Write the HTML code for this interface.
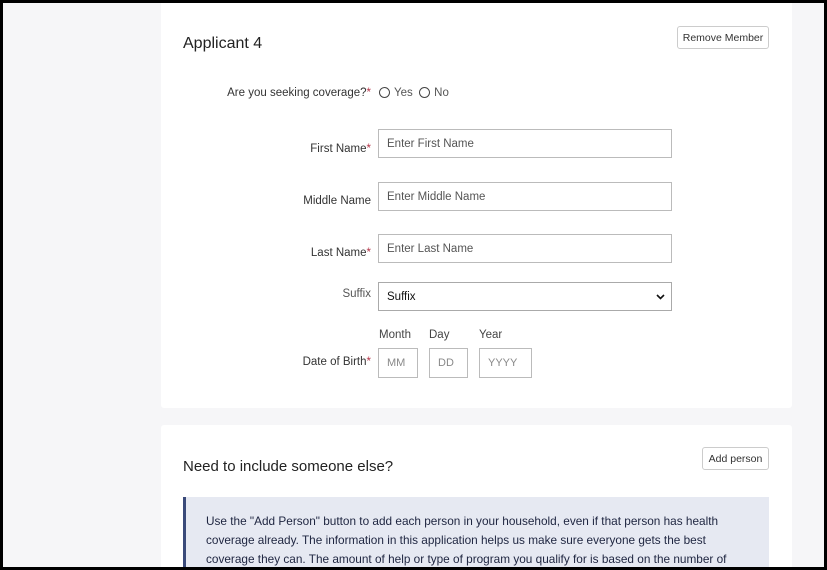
<!DOCTYPE html>
<html><head><style>
*{margin:0;padding:0;box-sizing:border-box}
body{width:827px;height:570px;overflow:hidden;background:#000;font-family:"Liberation Sans",sans-serif;color:#222;position:relative}
.frame{position:absolute;left:3px;top:3px;width:821px;height:564px;background:#f6f6f8;overflow:hidden}
.card{position:absolute;left:158px;width:631px;background:#fff;border-radius:3px}
.a{position:absolute;white-space:nowrap}
.lbl{font-size:11.5px;color:#333;text-align:right;width:198px}
.req{color:#b5364a}
.inp{position:absolute;border:1px solid #bbb;background:#fff;font-size:11.5px;color:#555;padding-left:8px;display:flex;align-items:center}
.btn{position:absolute;border:1px solid #ccc;border-radius:3px;background:#fff;font-size:10.5px;color:#333;display:flex;align-items:center;justify-content:center}
.radio{display:inline-block;width:11px;height:11px;border:1px solid #444;border-radius:50%;vertical-align:-2px;margin-right:4px}
</style></head><body>
<div class="frame">
<div class="card" style="top:-5px;height:410px">
  <div class="a" style="left:22px;top:37px;font-size:16px;color:#222">Applicant 4</div>
  <div class="btn" style="left:516px;top:28px;width:92px;height:23px">Remove Member</div>
  <div class="a lbl" style="left:12px;top:89px">Are you seeking coverage?<span class="req">*</span></div>
  <div class="a" style="left:218px;top:89px;font-size:11.5px;color:#555"><span class="radio"></span>Yes&nbsp;&nbsp;<span class="radio"></span>No</div>
  <div class="a lbl" style="left:12px;top:145px">First Name<span class="req">*</span></div>
  <div class="inp" style="left:217px;top:131px;width:294px;height:29px">Enter First Name</div>
  <div class="a lbl" style="left:12px;top:197px">Middle Name</div>
  <div class="inp" style="left:217px;top:184px;width:294px;height:29px">Enter Middle Name</div>
  <div class="a lbl" style="left:12px;top:249px">Last Name<span class="req">*</span></div>
  <div class="inp" style="left:217px;top:236px;width:294px;height:29px">Enter Last Name</div>
  <div class="a lbl" style="left:12px;top:290px;color:#555">Suffix</div>
  <div class="inp" style="left:217px;top:284px;width:294px;height:29px;color:#111;justify-content:space-between;padding-right:6px;border-color:#aaa">Suffix<svg width="9" height="6" viewBox="0 0 9 6"><path d="M1 1l3.5 3.5L8 1" fill="none" stroke="#111" stroke-width="1.6"/></svg></div>
  <div class="a" style="left:218px;top:331px;font-size:11.5px;color:#444">Month</div>
  <div class="a" style="left:268px;top:331px;font-size:11.5px;color:#444">Day</div>
  <div class="a" style="left:318px;top:331px;font-size:11.5px;color:#444">Year</div>
  <div class="a lbl" style="left:12px;top:358px">Date of Birth<span class="req">*</span></div>
  <div class="inp" style="left:217px;top:350px;width:40px;height:30px;font-size:11px;color:#888">MM</div>
  <div class="inp" style="left:268px;top:350px;width:39px;height:30px;font-size:11px;color:#888">DD</div>
  <div class="inp" style="left:318px;top:350px;width:53px;height:30px;font-size:11px;color:#888">YYYY</div>
</div>
<div class="card" style="top:422px;height:160px">
  <div class="a" style="left:22px;top:33px;font-size:15px;color:#222">Need to include someone else?</div>
  <div class="btn" style="left:541px;top:22px;width:67px;height:23px">Add person</div>
  <div style="position:absolute;left:22px;top:72px;width:586px;height:100px;background:#e6e9f2;border-left:3px solid #3a4a7a;padding:15px 20px;font-size:11.8px;line-height:19px;color:#1e2540">Use the "Add Person" button to add each person in your household, even if that person has health coverage already. The information in this application helps us make sure everyone gets the best coverage they can. The amount of help or type of program you qualify for is based on the number of</div>
</div>
</div>
</body></html>
